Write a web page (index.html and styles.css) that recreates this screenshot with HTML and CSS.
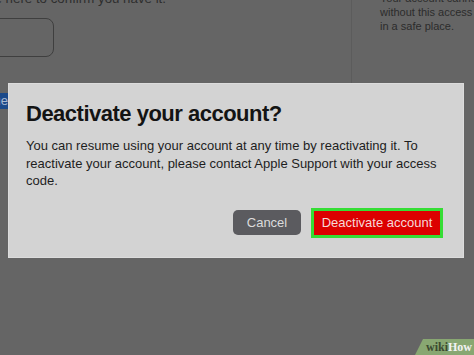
FILE: index.html
```html
<!DOCTYPE html>
<html lang="en">
<head>
    <meta charset="UTF-8">
    <meta name="viewport" content="width=device-width, initial-scale=1.0">
    <title>Deactivate your account</title>
    <link rel="stylesheet" href="styles.css">
</head>
<body>
    <div class="page">
        <div class="main-col">
            <div class="hint-row">
                <p class="hint">Enter the code here to confirm you have it.</p>
            </div>
            <div class="code-box"></div>
            <div class="blue-button">Continue</div>
        </div>
        <div class="side-col">
            <p class="side-text">Your account cannot be recovered<br>without this access code. Keep it<br>in a safe place.</p>
        </div>
    </div>

    <div class="dialog">
        <h1 class="dialog-title">Deactivate your account?</h1>
        <p class="dialog-text">You can resume using your account at any time by reactivating it. To<br>reactivate your account, please contact Apple Support with your access<br>code.</p>
        <div class="dialog-buttons">
            <button class="btn-cancel">Cancel</button>
            <span class="highlight">
                <button class="btn-deactivate">Deactivate account</button>
            </span>
        </div>
    </div>

    <div class="wikihow"><span class="wiki">wiki</span><span class="how">How</span></div>
</body>
</html>
```

FILE: styles.css
```css
    body {
        margin: 0;
        width: 474px;
        height: 355px;
        overflow: hidden;
        background-color: #656565;
        font-family: 'Liberation Sans', Arial, sans-serif;
        position: relative;
    }
    .page {
        display: flex;
        height: 355px;
    }
    .main-col {
        width: 351px;
        border-right: 1px solid #5c5c5c;
        height: 83px;
    }
    .hint-row {
        display: flex;
        justify-content: flex-end;
        width: 166px;
        margin-top: -9px;
    }
    .hint {
        margin: 0;
        font-size: 13.3px;
        line-height: 16px;
        color: #2e2e2e;
        white-space: nowrap;
    }
    .code-box {
        margin: 11px 0 0 -10px;
        width: 62px;
        height: 37px;
        border: 1px solid #3f3f3f;
        border-radius: 8px;
    }
    .blue-button {
        margin-top: 36px;
        margin-left: -50px;
        width: 58px;
        height: 16px;
        background-color: #1c4a8a;
        color: #a8b8d0;
        font-size: 13px;
        line-height: 16px;
        text-align: right;
        overflow: hidden;
    }
    .side-col {
        padding-left: 28px;
        flex: 1;
        overflow: hidden;
    }
    .side-text {
        margin: -9px 0 0 0;
        font-size: 11px;
        line-height: 14px;
        color: #2c2c2c;
        white-space: nowrap;
    }

    .dialog {
        position: absolute;
        left: 8px;
        top: 83px;
        width: 456px;
        height: 175px;
        box-sizing: border-box;
        background-color: #d3d3d3;
        border: 1px solid #dcdcdc;
        padding: 16px 20px 0 17px;
    }
    .dialog-title {
        margin: 0;
        font-size: 22px;
        letter-spacing: -0.5px;
        font-weight: bold;
        color: #141414;
        line-height: 28px;
    }
    .dialog-text {
        margin: 9px 0 0 0;
        font-size: 13px;
        line-height: 17.5px;
        color: #1e1e1e;
    }
    .dialog-buttons {
        display: flex;
        justify-content: flex-end;
        align-items: center;
        gap: 10px;
        margin-top: 18px;
    }
    .btn-cancel {
        width: 68px;
        height: 25px;
        border: none;
        border-radius: 5px;
        background-color: #5b5b5f;
        color: #dcdcdc;
        font-family: inherit;
        font-size: 13px;
    }
    .highlight {
        display: inline-block;
        padding: 3px;
        background-color: #35dd35;
    }
    .btn-deactivate {
        display: block;
        width: 126px;
        height: 24px;
        border: none;
        background-color: #dc0000;
        color: #f6d8d8;
        font-family: inherit;
        font-size: 13px;
    }

    .wikihow {
        position: absolute;
        right: 0;
        bottom: 0;
        width: 57px;
        height: 16px;
        padding-right: 2px;
        background-color: #88a772;
        clip-path: polygon(8px 0, 100% 0, 100% 100%, 0 100%);
        font-family: 'Liberation Serif', serif;
        font-weight: bold;
        font-size: 12px;
        line-height: 17px;
        text-align: right;
    }
    .wiki {
        color: #3b4a30;
    }
    .how {
        color: #f2f2f2;
    }
```
